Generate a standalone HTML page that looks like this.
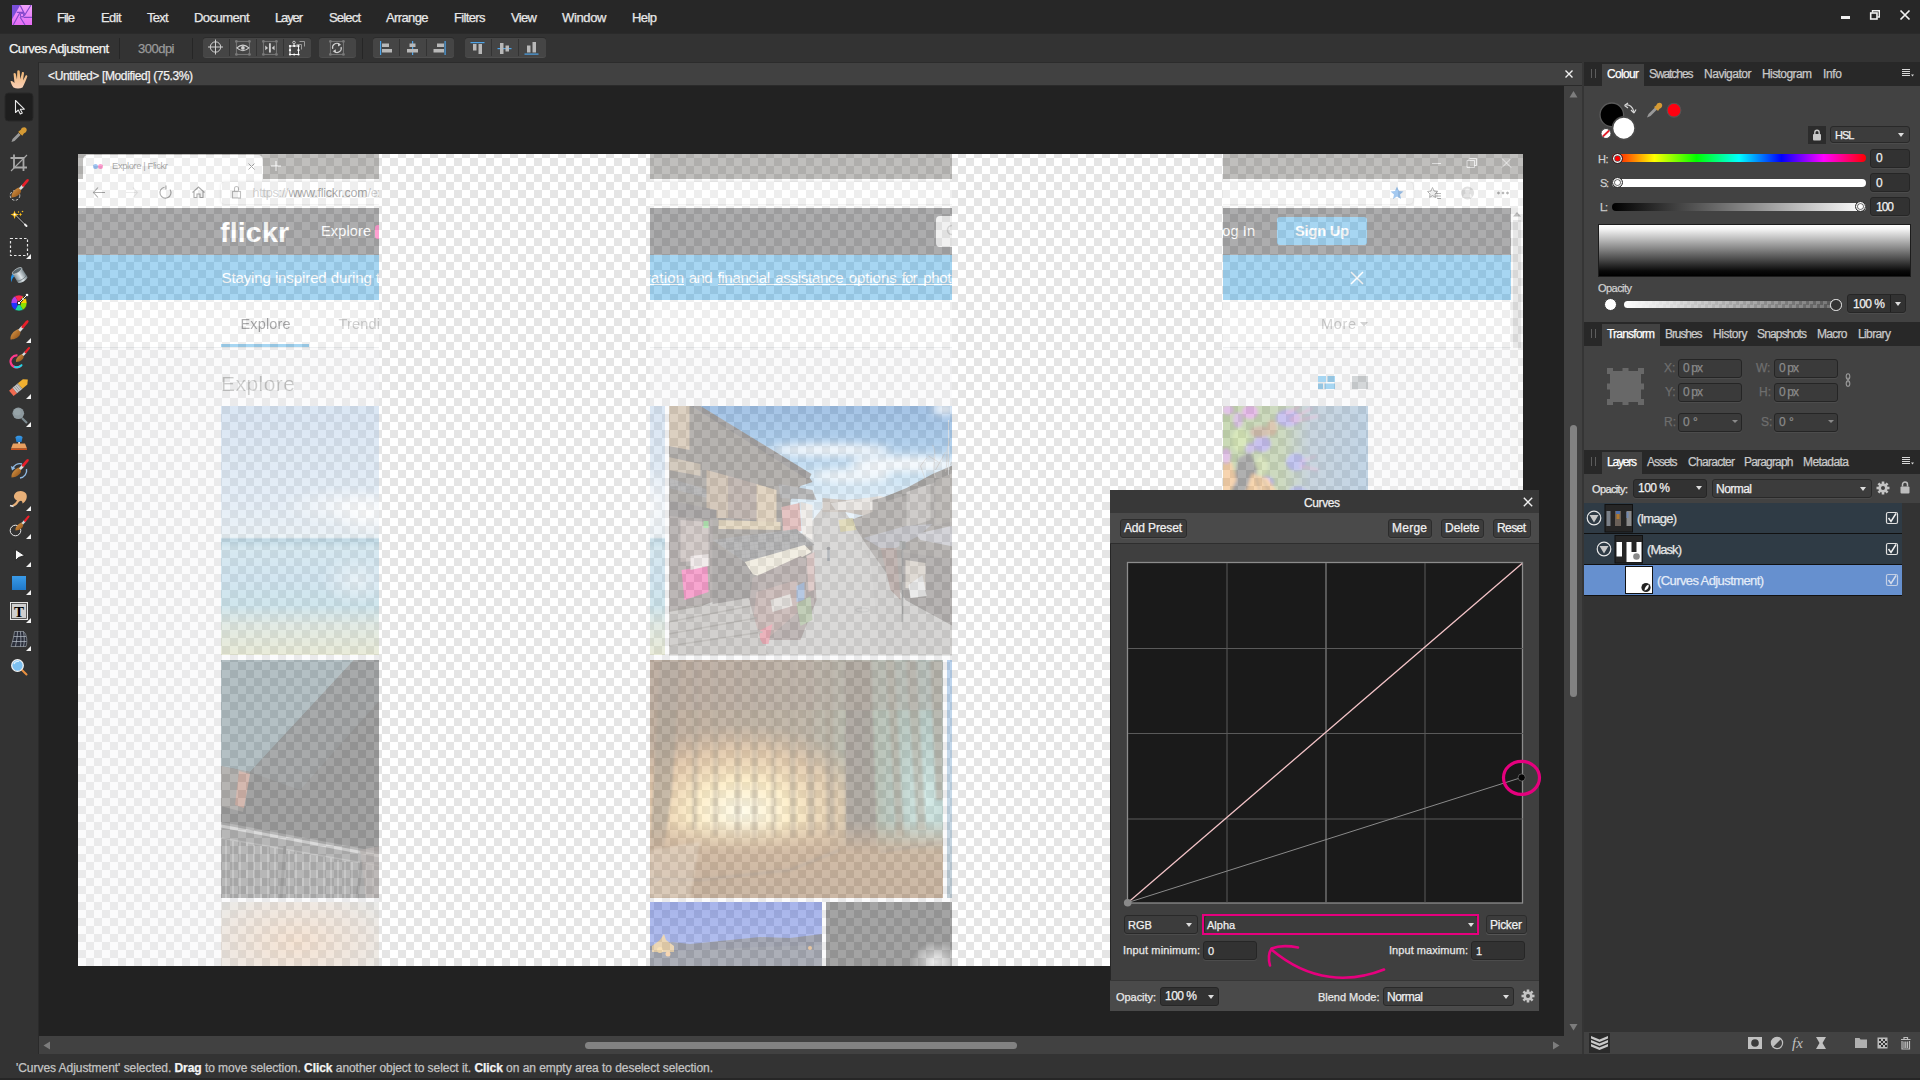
<!DOCTYPE html>
<html><head><meta charset="utf-8"><title>Affinity Photo</title>
<style>
*{box-sizing:border-box;margin:0;padding:0}
html,body{width:1920px;height:1080px;overflow:hidden;background:#222}
body{position:relative;font-family:"Liberation Sans",sans-serif;font-size:13px;color:#e8e8e8;-webkit-font-smoothing:antialiased}
.a{position:absolute}
.t{position:absolute;white-space:nowrap;line-height:16px;height:16px;-webkit-text-stroke:.25px currentColor}
.s{font-size:12px}
.box{position:absolute;background:#323232;border:1px solid #262626;border-radius:3px;box-shadow:0 1px 0 #4c4c4c}
.sel{background:#3c3c3c;border-color:#292929}
.btn{position:absolute;background:#3c3c3c;border:1px solid #2c2c2c;border-radius:3px;box-shadow:0 1px 0 #555}
.tri{position:absolute;width:0;height:0;border-left:4px solid transparent;border-right:4px solid transparent;border-top:4px solid #ddd}
svg{position:absolute;overflow:visible}
</style></head><body>
<div class="a" style="left:0;top:0;width:1920px;height:33px;background:#272727"></div>
<svg style="left:12px;top:5px" width="20" height="20" viewBox="0 0 20 20">
 <defs><linearGradient id="lg" x1="0" y1="0" x2="0" y2="1"><stop offset="0" stop-color="#f0a2fc"></stop><stop offset="1" stop-color="#e66cf4"></stop></linearGradient></defs>
 <rect width="20" height="20" fill="url(#lg)"></rect>
 <polygon points="0,0 8.300,0 0,14.200" fill="#7a4fd8"></polygon>
 <g stroke="#8248cc" stroke-width="1.150" fill="none">
  <path d="M1.200 20L8.100 7.300M4.800 7.300H11.500M8.200 0.600L12.800 9.500M19 0L12.300 10.800M11.500 12.400H20M8 12L13 20"></path>
  <circle cx="10" cy="10" r="1.800"></circle>
 </g>
</svg>
<span class="t" style="left: 57px; top: 10px; letter-spacing: -0.984px;">File</span>
<span class="t" style="left: 101px; top: 10px; letter-spacing: -0.635px;">Edit</span>
<span class="t" style="left: 147px; top: 10px; letter-spacing: -0.781px;">Text</span>
<span class="t" style="left: 194px; top: 10px; letter-spacing: -0.536px;">Document</span>
<span class="t" style="left: 275px; top: 10px; letter-spacing: -1.133px;">Layer</span>
<span class="t" style="left: 329px; top: 10px; letter-spacing: -0.828px;">Select</span>
<span class="t" style="left: 386px; top: 10px; letter-spacing: -0.625px;">Arrange</span>
<span class="t" style="left: 454px; top: 10px; letter-spacing: -0.648px;">Filters</span>
<span class="t" style="left: 511px; top: 10px; letter-spacing: -0.651px;">View</span>
<span class="t" style="left: 562px; top: 10px; letter-spacing: -0.35px;">Window</span>
<span class="t" style="left: 632px; top: 10px; letter-spacing: -0.583px;">Help</span>
<div class="a" style="left:1841px;top:16px;width:9px;height:3px;background:#f0f0f0"></div>
<svg style="left:1870px;top:10px" width="10" height="10" viewBox="0 0 10 10" fill="none" stroke="#f0f0f0" stroke-width="1.4"><path d="M2.5 2.5V0.7H9.3V7H7.5"></path><rect x="0.7" y="3" width="6.3" height="6" stroke-width="1.6"></rect></svg>
<svg style="left:1900px;top:10px" width="10" height="10" viewBox="0 0 10 10" stroke="#f0f0f0" stroke-width="1.7"><path d="M0.5 0.5L9.5 9.5M9.5 0.5L0.5 9.5"></path></svg>

<div class="a" style="left:0;top:33px;width:1920px;height:29px;background:#333;border-top:1px solid #2a2a2a"></div>
<span class="t" style="left: 9px; top: 41px; color: rgb(244, 244, 244); letter-spacing: -0.569px;">Curves Adjustment</span>
<div class="a" style="left:119px;top:38px;width:1px;height:21px;background:#262626"></div>
<span class="t" style="left: 138px; top: 41px; color: rgb(154, 154, 154); letter-spacing: -0.509px;">300dpi</span>
<div class="a" style="left:192px;top:38px;width:1px;height:21px;background:#262626"></div>
<div class="a" style="left:362px;top:38px;width:1px;height:21px;background:#262626"></div>
<!-- group 1 -->
<div class="a tb" style="left:203px;top:38px;width:108px;height:18.500px"></div>
<div class="a tbs" style="left:229px;top:39px"></div><div class="a tbs" style="left:256px;top:39px"></div><div class="a tbs" style="left:283px;top:39px"></div>
<div class="a tb" style="left:319px;top:38px;width:37px;height:18.500px"></div>
<div class="a tb" style="left:373px;top:38px;width:81px;height:18.500px"></div>
<div class="a tbs" style="left:399px;top:39px"></div><div class="a tbs" style="left:426px;top:39px"></div>
<div class="a tb" style="left:465px;top:38px;width:81px;height:18.500px"></div>
<div class="a tbs" style="left:491px;top:39px"></div><div class="a tbs" style="left:518px;top:39px"></div>
<style>.tb{background:#454545;border-radius:3px;box-shadow:0 1px 0 #4e4e4e,0 -1px 0 #2c2c2c}.tbs{width:1px;height:17px;background:#333}</style>
<!-- icons: target -->
<svg style="left:207px;top:39.400px" width="17" height="17" viewBox="0 0 17 17" fill="none" stroke="#d0d0d0" stroke-width="1"><circle cx="8.5" cy="8" r="5.2"></circle><path d="M8.5 0.5V15.5M1 8H16"></path></svg>
<!-- eye -->
<svg style="left:235.200px;top:40.100px" width="15.800" height="15.800" viewBox="0 0 17 17" fill="none"><rect x="1.5" y="1.5" width="14" height="14" stroke="#7a7a7a"></rect><g fill="#7a7a7a"><circle cx="1.5" cy="1.5" r="1.5"></circle><circle cx="15.5" cy="1.5" r="1.5"></circle><circle cx="1.5" cy="15.5" r="1.5"></circle><circle cx="15.5" cy="15.5" r="1.5"></circle></g><path d="M2 8.5Q8.5 2.5 15 8.5Q8.5 14.5 2 8.5Z" stroke="#d0d0d0" stroke-width="1.1" fill="#454545"></path><circle cx="8.5" cy="8.5" r="2" fill="#d0d0d0"></circle></svg>
<!-- flip -->
<svg style="left:262.200px;top:40.100px" width="15.800" height="15.800" viewBox="0 0 17 17" fill="none"><rect x="1.5" y="1.5" width="14" height="14" stroke="#7a7a7a"></rect><g fill="#7a7a7a"><circle cx="1.5" cy="1.5" r="1.5"></circle><circle cx="15.5" cy="1.5" r="1.5"></circle><circle cx="1.5" cy="15.5" r="1.5"></circle><circle cx="15.5" cy="15.5" r="1.5"></circle></g><rect x="7.5" y="3.5" width="2" height="10" fill="#cfcfcf"></rect><path d="M3.5 6L6.5 8.5L3.5 11Z M13.5 6L10.5 8.5L13.5 11Z" fill="#cfcfcf"></path></svg>
<!-- transform copies -->
<svg style="left:288px;top:38.500px" width="19" height="19" viewBox="0 0 19 19" fill="none"><path d="M11.5 2.5H16.5V7.5" stroke="#9a9a9a"></path><path d="M8.5 5.5H13.5V10.5" stroke="#9a9a9a"></path><circle cx="6" cy="3.5" r="1.3" stroke="#e0e0e0" stroke-width=".8"></circle><path d="M6 5V7" stroke="#e0e0e0"></path><rect x="2" y="7" width="8.5" height="8.5" stroke="#f0f0f0" stroke-width="1"></rect><g fill="#fff"><circle cx="2" cy="7" r="1.1"></circle><circle cx="6.2" cy="7" r="1.1"></circle><circle cx="10.5" cy="7" r="1.1"></circle><circle cx="2" cy="11.2" r="1.1"></circle><circle cx="10.5" cy="11.2" r="1.1"></circle><circle cx="2" cy="15.5" r="1.1"></circle><circle cx="6.2" cy="15.5" r="1.1"></circle><circle cx="10.5" cy="15.5" r="1.1"></circle></g></svg>
<!-- refresh -->
<svg style="left:329.150px;top:40.100px" width="15.800" height="15.800" viewBox="0 0 17 17" fill="none"><rect x="1.5" y="1.5" width="14" height="14" stroke="#7a7a7a"></rect><g fill="#7a7a7a"><circle cx="1.5" cy="1.5" r="1.5"></circle><circle cx="15.5" cy="1.5" r="1.5"></circle><circle cx="1.5" cy="15.5" r="1.5"></circle><circle cx="15.5" cy="15.5" r="1.5"></circle></g><path d="M4 9.5A4.6 4.6 0 0 1 11.5 4.8" stroke="#d0d0d0" stroke-width="1.3"></path><path d="M13 7.5A4.6 4.6 0 0 1 5.5 12.2" stroke="#d0d0d0" stroke-width="1.3"></path><path d="M9.5 3L13 5L9.8 7Z M7.5 14L4 12L7.2 10Z" fill="#d0d0d0"></path></svg>
<!-- align left / centre / right -->
<svg style="left:378px;top:40px" width="17" height="17" viewBox="0 0 17 17"><rect x="2" y="1" width="1.2" height="14" fill="#4da3e8"></rect><rect x="4" y="3.5" width="7" height="3.5" fill="#b8b8b8"></rect><rect x="4" y="9" width="10" height="3.5" fill="#b8b8b8"></rect></svg>
<svg style="left:404px;top:40px" width="17" height="17" viewBox="0 0 17 17"><rect x="8" y="1" width="1.2" height="14" fill="#4da3e8"></rect><rect x="5.5" y="3.5" width="6" height="3.5" fill="#b8b8b8"></rect><rect x="3" y="9" width="11" height="3.5" fill="#b8b8b8"></rect></svg>
<svg style="left:431px;top:40px" width="17" height="17" viewBox="0 0 17 17"><rect x="13.5" y="1" width="1.2" height="14" fill="#4da3e8"></rect><rect x="6" y="3.5" width="7" height="3.5" fill="#b8b8b8"></rect><rect x="2.5" y="9" width="10.500" height="3.5" fill="#b8b8b8"></rect></svg>
<!-- align top / middle / bottom -->
<svg style="left:469px;top:40px" width="17" height="17" viewBox="0 0 17 17"><rect x="1.500" y="2" width="14" height="1.2" fill="#4da3e8"></rect><rect x="4" y="4" width="3.500" height="6.500" fill="#b8b8b8"></rect><rect x="9.500" y="4" width="3.500" height="10" fill="#b8b8b8"></rect></svg>
<svg style="left:496px;top:40px" width="17" height="17" viewBox="0 0 17 17"><rect x="1.500" y="8" width="14" height="1.2" fill="#4da3e8"></rect><rect x="4" y="3" width="3.500" height="11" fill="#b8b8b8"></rect><rect x="9.500" y="5.500" width="3.500" height="6" fill="#b8b8b8"></rect></svg>
<svg style="left:523px;top:40px" width="17" height="17" viewBox="0 0 17 17"><rect x="1.500" y="13.500" width="14" height="1.2" fill="#4da3e8"></rect><rect x="4" y="5.500" width="3.500" height="7" fill="#b8b8b8"></rect><rect x="9.500" y="2" width="3.500" height="10.500" fill="#b8b8b8"></rect></svg>

<div class="a" style="left:0;top:62px;width:38px;height:992px;background:#333"></div>
<div class="a" style="left:38px;top:62px;width:1px;height:992px;background:#2a2a2a"></div>
<svg style="left:0;top:62px" width="38" height="620" viewBox="0 62 38 620">
<defs>
<linearGradient id="skin" x1="0" y1="0" x2="0" y2="1"><stop offset="0" stop-color="#f0b46e"></stop><stop offset="1" stop-color="#f8d0b8"></stop></linearGradient>
<linearGradient id="bristle" x1="0" y1="0" x2="1" y2="1"><stop offset="0" stop-color="#e0a050"></stop><stop offset="1" stop-color="#8a4a10"></stop></linearGradient>
<linearGradient id="blue" x1="0" y1="0" x2="0" y2="1"><stop offset="0" stop-color="#3a9be8"></stop><stop offset="1" stop-color="#1f78c8"></stop></linearGradient>
<linearGradient id="met" x1="0" y1="0" x2="1" y2="0"><stop offset="0" stop-color="#7d8a90"></stop><stop offset=".5" stop-color="#dfe6ea"></stop><stop offset="1" stop-color="#79868c"></stop></linearGradient>
<g id="brush"><path d="M0 0C-.5 -4 2.500 -7.500 7 -9.500C9.500 -8 9.500 -5.500 8 -3.500C5.500 -.5 2.500 -.2 0 0Z" fill="url(#bristle)"></path><path d="M8 -8L11.200 -11.500" stroke="#dcdcdc" stroke-width="2.700"></path><path d="M11.200 -11.500L15 -16" stroke="#e8202a" stroke-width="2.600" stroke-linecap="round"></path><path d="M14.500 -15.400L15.600 -16.700" stroke="#e8202a" stroke-width="1.600" stroke-linecap="round"></path></g>
<polygon id="fly" points="0,5 5,0 5,5" fill="#f2f2f2"></polygon>
</defs>
<!-- hand -->
<g transform="translate(0,0)">
<path d="M13.500 87.500C11.500 85 11 82.500 10.500 81.500C11.500 80.500 13 81.500 14.500 83L13.500 73.500C14.500 72.500 15.500 72.800 15.800 74L17 79.500L17.300 70.800C18.300 69.800 19.500 70 19.700 71.300L20.300 79.300L22 72.200C23 71.500 24 72 24 73.200L23 80.500L25.800 75.300C26.800 74.800 27.500 75.500 27.300 76.500C26 80 24.500 84 22.500 87.500C20 88.800 16 88.800 13.500 87.500Z" fill="url(#skin)"></path>
</g>
<!-- pointer selected -->
<rect x="5" y="93" width="28" height="28" rx="3.500" fill="#1e1e1e" stroke="#282828"></rect>
<path d="M15.500 100.500V112.500L18.300 110L20.300 114L22.300 113L20.300 109.200H24.300Z" fill="#1a1a1a" stroke="#e8e8e8" stroke-width="1.100" stroke-linejoin="round"></path>
<!-- eyedropper -->
<path d="M11.500 142L12.500 139L19.500 132L21.500 134L14.500 141Z" fill="#9a9a9a"></path><path d="M18.500 132.500L21 135" stroke="#6a5020" stroke-width="1"></path>
<path d="M18.300 131.800C19.500 130.500 20.500 130.500 21 129.500C21.500 127.500 24.500 126.500 26 128C27.500 129.500 26.500 132.500 24.500 133C23.500 133.500 23.500 134.500 22.300 135.700Z" fill="#d59a34"></path>
<!-- crop -->
<g stroke="#a8a8a8" stroke-width="1.800" fill="none"><path d="M14 154.500V167.500H27M10.500 158H23.500V171"></path><path d="M11 171L27 155" stroke-width="1.100"></path></g>
<!-- selection brush -->
<circle cx="15" cy="195.500" r="4.800" fill="none" stroke="#cfcfcf" stroke-width=".9" stroke-dasharray="2.500 1.500"></circle>
<use href="#brush" transform="translate(11.500,197.500) scale(1.050)"></use>
<!-- wand -->
<path d="M15.500 215L26.500 226" stroke="#202020" stroke-width="2"></path><path d="M15.500 215L26.500 226" stroke="#c8c8c8" stroke-width="1"></path><path d="M25 224.500L26.500 226" stroke="#eee" stroke-width="2" stroke-linecap="round"></path>
<path d="M14.500 210.500L15.500 213.500L19 214.500L15.800 215.800L14.500 219L13.500 215.800L10.500 214.500L13.500 213.500Z" fill="#ffc21a"></path><circle cx="14.600" cy="214.600" r="1" fill="#fff"></circle>
<path d="M20.500 212.500L21 214L22.300 214.500L21 215L20.500 216.500L20 215L18.800 214.500L20 214Z" fill="#ffc21a"></path><circle cx="22.500" cy="211.500" r=".8" fill="#ffc21a"></circle><circle cx="18.500" cy="212" r=".7" fill="#ffc21a"></circle>
<!-- marquee -->
<rect x="10.500" y="238.500" width="17" height="17" fill="none" stroke="#e6e6e6" stroke-width="1.200" stroke-dasharray="2.500 2"></rect>
<use href="#fly" x="26" y="254"></use>
<!-- bucket -->
<path d="M15 273C11.500 273.500 10 277 11.500 282.500C12 279 13 276.500 16.500 275.500Z" fill="#1f8fe6"></path>
<g transform="translate(20,275.500) rotate(-32)"><path d="M-5.500 -5.500H5.500V5.500C3 7.500 -3 7.500 -5.500 5.500Z" fill="url(#met)"></path><ellipse cx="0" cy="-5.500" rx="5.500" ry="2" fill="#5a666c" stroke="#cfd6da" stroke-width=".6"></ellipse><path d="M-5.500 3C-3 5 3 5 5.500 3" stroke="#60696e" stroke-width=".7" fill="none"></path></g>
<!-- colour wheel (conic via foreignObject-less: pie slices) -->
<g transform="translate(19,303)">
<path d="M0 0L8 0A8 8 0 0 1 4 6.930Z" fill="#8ee000"></path><path d="M0 0L4 6.930A8 8 0 0 1 -4 6.930Z" fill="#19d6a0"></path><path d="M0 0L-4 6.930A8 8 0 0 1 -8 0Z" fill="#2030ff"></path><path d="M0 0L-8 0A8 8 0 0 1 -4 -6.930Z" fill="#b040e8"></path><path d="M0 0L-4 -6.930A8 8 0 0 1 4 -6.930Z" fill="#ff2a50"></path><path d="M0 0L4 -6.930A8 8 0 0 1 8 0Z" fill="#ffd000"></path>
<circle r="8" fill="none" stroke="#313131" stroke-width=".6"></circle><circle r="2.200" fill="#222"></circle><path d="M0 0L8 -8" stroke="#222" stroke-width="2.200"></path><path d="M0 0L8 -8" stroke="#f2f2f2" stroke-width="1"></path><circle r="1.200" fill="#fff"></circle><circle cx="8" cy="-8" r="1.300" fill="#fff"></circle><circle cx="4" cy="-4" r="1" fill="#ddd"></circle>
</g>
<!-- paint brush -->
<use href="#brush" transform="translate(10.500,339.500) scale(1.100)"></use>
<use href="#fly" x="26" y="338"></use>
<!-- colour replace brush -->
<path d="M17.500 355.500A6 6 0 1 0 21 365.500" fill="none" stroke="#ff3a8a" stroke-width="2.200"></path><path d="M14 366.500A6 6 0 0 0 22 364.500" fill="none" stroke="#20d8e8" stroke-width="2"></path>
<use href="#brush" transform="translate(16,362) scale(.850)"></use>
<!-- eraser -->
<g transform="translate(19,387) rotate(-40)"><rect x="-10" y="-3.500" width="4.500" height="7" fill="#f06a50"></rect><rect x="-5.500" y="-3.500" width="7" height="7" fill="#c8c8c8"></rect><path d="M-3.500 -3.500V3.500M-1.500 -3.500V3.500M.500 -3.500V3.500" stroke="#8a8a8a" stroke-width=".7"></path><path d="M1.500 -3.500H8L11.500 0L8 3.500H1.500Z" fill="#f0b030"></path></g>
<use href="#fly" x="26" y="394"></use>
<!-- dodge -->
<path d="M22 418L27 423" stroke="#7c8a90" stroke-width="2.200"></path><circle cx="18.300" cy="413.300" r="5.800" fill="#8d999e"></circle><circle cx="17.300" cy="412" r="3.500" fill="#9aa6ab" opacity=".7"></circle>
<use href="#fly" x="26" y="422"></use>
<!-- clone stamp -->
<path d="M15.500 437.500C15.500 435 22.500 435 22.500 437.500L21.500 442H16.500Z" fill="url(#blue)"></path><rect x="18.300" y="442" width="1.600" height="3" fill="#e8e8e8"></rect><path d="M13 443.500H25L27 448.500H11Z" fill="#e8a060"></path><path d="M11 448.500H27V450H11Z" fill="#c8501a"></path>
<!-- undo brush -->
<path d="M12.500 469A7.500 7.500 0 0 1 22 464" stroke="#8fb8e0" stroke-width="1.400" fill="none"></path><path d="M10.800 466L12 470.500L15.500 468Z" fill="#8fb8e0"></path><path d="M26.500 469A7.500 7.500 0 0 1 20 478" stroke="#8fb8e0" stroke-width="1.400" fill="none"></path>
<use href="#brush" transform="translate(11.500,477.500) scale(1.050)"></use>
<!-- smudge -->
<path d="M10 505.500C13 507.500 16 506 18 503C20 500 22.500 500 22.500 503.500C26 502 28 497 26 493.500C24 490.500 18 490 15 493.500C13 496 14 499 17 500.500C15 504 12 505.500 10 505.500Z" fill="#e8b078"></path><path d="M10 505.500L13.500 506.500" stroke="#e0e0e0" stroke-width="1.500"></path>
<use href="#fly" x="26" y="506"></use>
<!-- blur brush -->
<circle cx="15.500" cy="530.500" r="5.300" fill="none" stroke="#e8e8e8" stroke-width="1"></circle>
<use href="#brush" transform="translate(15.500,530.500) scale(.850)"></use>
<use href="#fly" x="26" y="534"></use>
<!-- node arrow -->
<path d="M15.500 549.500V560.500L18.500 557.500L24.500 555.500Z" fill="#f8f8f8" stroke="#1a1a1a" stroke-width=".8" stroke-linejoin="round"></path>
<use href="#fly" x="26" y="562"></use>
<!-- rectangle -->
<rect x="12" y="576" width="14" height="14" fill="url(#blue)"></rect>
<use href="#fly" x="26" y="590"></use>
<!-- text -->
<rect x="10.500" y="602.500" width="17" height="17" fill="#d4d4d4" stroke="#e8e8e8"></rect><rect x="11.500" y="603.500" width="15" height="15" fill="#cfcfcf" stroke="#3a3a3a" stroke-width=".8"></rect>
<text x="19" y="616.500" font-family="Liberation Serif,serif" font-weight="bold" font-size="15" text-anchor="middle" fill="#000">T</text>
<use href="#fly" x="26" y="618"></use>
<!-- mesh -->
<path d="M14.500 631.500H23.500C27 634 27.500 642 26 646.500H11C12.500 642 14 636 14.500 631.500Z" fill="#2a2e3a" stroke="#9aa0a8" stroke-width=".7"></path>
<path d="M13.700 636.500H26M12.500 641.500H26.500M17.500 631.500C17.500 637 16 643 15.500 646.500M20.500 631.500C21 637 21 643 20.500 646.500M23.500 631.500C24.500 637 24.500 643 23.500 646.500" stroke="#b8bec8" stroke-width=".7" fill="none"></path>
<use href="#fly" x="26" y="646"></use>
<!-- zoom -->
<path d="M22 670L26.500 674.500" stroke="#e89040" stroke-width="2" stroke-linecap="round"></path>
<circle cx="17.500" cy="665.500" r="5.800" fill="#7cc0f0" stroke="#f2f2f2" stroke-width="1.300"></circle><path d="M14 664A4 4 0 0 1 19 661.500" stroke="#d8f0ff" stroke-width="1.300" fill="none"></path>
</svg>

<!-- doc tab -->
<div class="a" style="left:39px;top:62px;width:1543px;height:24px;background:#414141;border-top:1px solid #2c2c2c;border-bottom:1px solid #2a2a2a"></div>
<span class="t s" style="left: 48px; top: 67.5px; color: rgb(242, 242, 242); letter-spacing: -0.372px;">&lt;Untitled&gt; [Modified] (75.3%)</span>
<svg style="left:1565px;top:70px" width="8" height="8" viewBox="0 0 8 8" stroke="#f0f0f0" stroke-width="1.400"><path d="M.5 .5L7.500 7.500M7.500 .5L.5 7.500"></path></svg>
<!-- scrollbars -->
<div class="a" style="left:1564px;top:86px;width:18px;height:968px;background:#414141"></div>
<div class="a" style="left:1582px;top:62px;width:2px;height:992px;background:#353535"></div>
<div class="a" style="left:39px;top:1036px;width:1543px;height:18px;background:#414141"></div>
<div class="a" style="left:1570px;top:425px;width:7px;height:272px;border-radius:4px;background:#828282"></div>
<div class="a" style="left:585px;top:1042px;width:432px;height:7px;border-radius:4px;background:#828282"></div>
<svg style="left:1569px;top:91px" width="9" height="7"><path d="M4.500 0L8.500 6.500H.5Z" fill="#7d7d7d"></path></svg>
<svg style="left:1569px;top:1024px" width="9" height="7"><path d="M4.500 6.500L8.500 0H.5Z" fill="#7d7d7d"></path></svg>
<svg style="left:43px;top:1041px" width="8" height="9"><path d="M.5 4.500L7 .5V8.500Z" fill="#7d7d7d"></path></svg>
<svg style="left:1552px;top:1041px" width="8" height="9"><path d="M7.500 4.500L1 .5V8.500Z" fill="#7d7d7d"></path></svg>
<!-- canvas -->
<div class="a" id="cv" style="left:78px;top:154px;width:1445px;height:812px;overflow:hidden;background-color:#fff;background-image:conic-gradient(#e5e5e5 25%,#fff 0 50%,#e5e5e5 0 75%,#fff 0);background-size:16px 16px;background-position:0px 4px">
<div class="a" id="pg" style="left:-78px;top:-154px;width:1920px;height:1080px;opacity:.37;-webkit-mask-image:linear-gradient(90deg,#000 378.800px,transparent 379.200px,transparent 650px,#000 650.400px,#000 951.600px,transparent 952px,transparent 1222.700px,#000 1223.100px);mask-image:linear-gradient(90deg,#000 378.800px,transparent 379.200px,transparent 650px,#000 650.400px,#000 951.600px,transparent 952px,transparent 1222.700px,#000 1223.100px)">
<style>
#pg div,#pg span{position:absolute}
#pg span{white-space:nowrap}
.ph{overflow:hidden}
</style>
<!-- browser chrome -->
<div style="left:78px;top:154px;width:1445px;height:24.500px;background:#55524e"></div>
<div style="left:83px;top:155px;width:180px;height:24px;background:#fff;border-radius:5px 5px 0 0"></div>
<div style="left:78px;top:179px;width:1445px;height:29px;background:#fff"></div>
<div style="left:93px;top:164px;width:5px;height:5px;border-radius:3px;background:#0063dc"></div>
<div style="left:98px;top:164px;width:5px;height:5px;border-radius:3px;background:#ff0084"></div>
<span style="left: 112px; top: 160px; font-size: 9.5px; color: rgb(34, 34, 34); line-height: 12px; letter-spacing: -0.444px;">Explore | Flickr</span>
<svg style="left:248px;top:163px" width="7" height="7" stroke="#222" stroke-width="1"><path d="M.5 .5L6.500 6.500M6.500 .5L.5 6.500"></path></svg>
<svg style="left:271px;top:161px" width="10" height="10" stroke="#fff" stroke-width="1"><path d="M5 0V10M0 5H10"></path></svg>
<svg style="left:1432px;top:158px" width="80" height="10" stroke="#e8e8e8" stroke-width=".8" fill="none"><path d="M0 5.500H9"></path><path d="M37 2.500V.5H44.500V7.500H42.500M35 2.500H42.500V9.500H35Z"></path><path d="M70 .5L79 9.500M79 .5L70 9.500"></path></svg>
<!-- address row -->
<svg style="left:90px;top:185px" width="130" height="16" fill="none" stroke="#222" stroke-width="1.100"><path d="M15 7.500H3.500M8 2.500L3.500 7.500L8 12.500"></path><path d="M36 7.500H47.500M43 2.500L47.500 7.500L43 12.500" stroke="#ccc"></path><path d="M80 4.500A5.500 5.500 0 1 1 74.500 2.200M76 0.500V4.500"></path><path d="M102.500 7.500L108.500 2L114.500 7.500M104 6.500V12.500H107V9H110V12.500H113V6.500"></path></svg>
<div style="left:221px;top:182px;width:1192px;height:22px;border-radius:4px;background:#fff;box-shadow:0 0 3px rgba(0,0,0,.35)"></div>
<svg style="left:231px;top:185px" width="12" height="15" fill="none" stroke="#555" stroke-width="1.100"><rect x="1.500" y="6.500" width="8" height="6.500"></rect><path d="M3.500 6.500V3.500A2 2 0 0 1 7.500 3.500V6.500"></path></svg>
<span style="left: 252.5px; top: 186px; font-size: 12.5px; color: rgb(102, 102, 102); line-height: 14px; letter-spacing: -0.206px;"><span style="position:static;color:#888">https://</span><span style="position:static;color:#1a1a1a">www.flickr.com</span><span style="position:static;color:#888">/explore</span></span>
<svg style="left:1390px;top:186px" width="130" height="14" fill="none" stroke="#333" stroke-width="1"><path d="M7 .5L9 5L13.500 5.500L10 8.500L11 13L7 10.500L3 13L4 8.500L.5 5.500L5 5Z" fill="#0a6cd6" stroke="none"></path><path d="M42.500 1.500L44 5L47.500 5.500L45 8L45.500 11.500L42.500 9.500L39.500 11.500L40 8L37.500 5.500L41 5Z"></path><path d="M46 7.500H51M46 10H51M47 12.500H51"></path><circle cx="77.500" cy="7" r="6.500" fill="#aaa" stroke="none"></circle><circle cx="77.500" cy="5" r="2.500" fill="#ddd" stroke="none"></circle><path d="M73 11.500A4.500 4.500 0 0 1 82 11.500Z" fill="#ddd" stroke="none"></path><circle cx="108.500" cy="7" r=".9" fill="#333"></circle><circle cx="113" cy="7" r=".9" fill="#333"></circle><circle cx="117.500" cy="7" r=".9" fill="#333"></circle></svg>
<!-- flickr nav -->
<div style="left:78px;top:208px;width:1433px;height:47px;background:#212124"></div>
<span style="left: 220px; top: 215px; font-size: 28.5px; font-weight: bold; color: rgb(255, 255, 255); line-height: 34px; letter-spacing: 0.175px;">flickr</span>
<span style="left: 321px; top: 222px; font-size: 14.5px; color: rgb(255, 255, 255); line-height: 18px; letter-spacing: 0.138px;">Explore</span>
<div style="left:375px;top:225px;width:30px;height:14px;border-radius:3px;background:#ff0084"></div>
<div style="left:936.200px;top:215.800px;width:280px;height:31px;border-radius:4px;background:#d8d8d8"></div>
<svg style="left:946px;top:223.500px" width="14" height="14" fill="none" stroke="#8a8a8a" stroke-width="1.600"><circle cx="6" cy="6" r="4.500"></circle><path d="M9.500 9.500L13 13"></path></svg>
<span style="left: 1214px; top: 222px; font-size: 14.5px; color: rgb(255, 255, 255); line-height: 18px; letter-spacing: 0.134px;">Log In</span>
<div style="left:1277px;top:217px;width:90px;height:28px;border-radius:3px;background:#128fdc"></div>
<span style="left: 1295px; top: 222px; font-size: 14.5px; font-weight: bold; color: rgb(255, 255, 255); line-height: 18px; letter-spacing: -0.13px;">Sign Up</span>
<!-- banner -->
<div style="left:78px;top:255px;width:1433px;height:45px;background:#128fdc"></div>
<span style="left: 221.5px; top: 268px; font-size: 15px; color: rgb(255, 255, 255); line-height: 19px; letter-spacing: -0.101px;">Staying inspired during the</span>
<span style="left: 614px; top: 268px; font-size: 15px; color: rgb(255, 255, 255); line-height: 19px; letter-spacing: 0.163px;">inspiration</span>
<span style="left: 688.7px; top: 268px; font-size: 15px; color: rgb(255, 255, 255); line-height: 19px; letter-spacing: -0.616px;">and</span>
<span style="left: 717.5px; top: 268px; font-size: 15px; color: rgb(255, 255, 255); line-height: 19px; letter-spacing: -0.318px;">financial</span>
<span style="left: 775.3px; top: 268px; font-size: 15px; color: rgb(255, 255, 255); line-height: 19px; letter-spacing: -0.275px;">assistance</span>
<span style="left: 848.7px; top: 268px; font-size: 15px; color: rgb(255, 255, 255); line-height: 19px; letter-spacing: -0.063px;">options</span>
<span style="left: 901.7px; top: 268px; font-size: 15px; color: rgb(255, 255, 255); line-height: 19px; letter-spacing: -0.858px;">for</span>
<span style="left: 923.3px; top: 268px; font-size: 15px; color: rgb(255, 255, 255); line-height: 19px; letter-spacing: -0.396px;">photographers</span>
<div style="left:614px;top:283.500px;width:70px;height:1.200px;background:#fff"></div>
<div style="left:717.500px;top:283.500px;width:298px;height:1.200px;background:#fff"></div>
<svg style="left:1350px;top:271px" width="14" height="14" stroke="#fff" stroke-width="1.500"><path d="M1 1L13 13M13 1L1 13"></path></svg>
<!-- sub nav -->
<div style="left:78px;top:300px;width:1433px;height:46.500px;background:#fff"></div>
<div style="left:78px;top:346.500px;width:1433px;height:1px;background:#cfd3d6"></div>
<div style="left:78px;top:347.500px;width:1445px;height:622px;background:#f3f5f6"></div>
<span style="left: 240.5px; top: 315px; font-size: 14.5px; color: rgb(33, 33, 36); line-height: 18px; letter-spacing: 0.138px;">Explore</span>
<div style="left:221px;top:344px;width:88px;height:3px;background:#128fdc"></div>
<span style="left: 338.5px; top: 315px; font-size: 14.5px; color: rgb(137, 137, 137); line-height: 18px; letter-spacing: 0.185px;">Trending</span>
<span style="left: 1321px; top: 315px; font-size: 14.5px; color: rgb(137, 137, 137); line-height: 18px; letter-spacing: 0.651px;">More</span>
<svg style="left:1360px;top:322px" width="8" height="5"><path d="M0 0H8L4 4.500Z" fill="#898989"></path></svg>
<!-- browser scrollbar -->
<div style="left:1511px;top:208px;width:12px;height:760px;background:#f1f1f1"></div>
<div style="left:1513px;top:220px;width:8px;height:128px;background:#c1c1c1"></div>
<svg style="left:1513px;top:212px" width="8" height="5"><path d="M0 4.500H8L4 0Z" fill="#505050"></path></svg>
<!-- heading -->
<span style="left: 221px; top: 371px; font-size: 21px; color: rgb(112, 112, 112); line-height: 25px; -webkit-text-stroke: 0.2px rgb(243, 245, 246); letter-spacing: 0.466px;">Explore</span>
<svg style="left:1318px;top:376px" width="52" height="14"><path d="M0 0H8V6H0ZM9.500 0H17V6H9.500ZM0 7.500H5V13H0ZM6.500 7.500H17V13H6.500Z" fill="#128fdc"></path><rect x="34" y="0" width="16" height="13" fill="#8a9299"></rect></svg>
<!-- P1 beach 221-665 x 406-655 -->
<div class="ph" style="left:221px;top:406px;width:444px;height:249px;background:linear-gradient(180deg,#9cbce0 0%,#b6cfe8 35%,#c6d9e8 50%,#cbdeea 52.700%,#5a9aba 53.500%,#93c4d8 57%,#88bad8 70%,#80bace 80%,#b2c8b8 88%,#c4c898 100%)">
<div style="left:60px;top:80px;width:130px;height:40px;border-radius:50%;background:radial-gradient(closest-side,rgba(255,255,255,.7),rgba(255,255,255,0))"></div>
<div style="left:110px;top:85px;width:70px;height:45px;border-radius:50%;background:radial-gradient(closest-side,rgba(255,255,255,.95),rgba(255,255,255,0))"></div>
<div style="left:400px;top:60px;width:60px;height:80px;border-radius:50%;background:radial-gradient(closest-side,rgba(255,255,255,.8),rgba(255,255,255,0))"></div>
<div style="left:100px;top:150px;width:70px;height:50px;border-radius:50%;background:radial-gradient(closest-side,rgba(255,255,255,.5),rgba(255,255,255,0))"></div>
</div>
<!-- P2 dark bridge 221-646 x 660-898 -->
<svg style="left:221px;top:660px" width="425" height="238" viewBox="221 660 425 238">
<rect x="221" y="660" width="425" height="238" fill="#080808"></rect>
<polygon points="221,660 354,660 250,772 221,766" fill="#345660"></polygon>
<polygon points="354,660 380,660 380,700 300,790 250,772" fill="#141a1c"></polygon>
<polygon points="221,766 250,772 243,812 221,806" fill="#3a3430"></polygon>
<polygon points="239,771 250,774 244,808 235,805" fill="#8a4028"></polygon>
<polygon points="221,822 380,852 380,898 221,898" fill="#3c3c3c"></polygon>
<path d="M221 826L380 856" stroke="#9a9a9a" stroke-width="3"></path>
<path d="M221 838L380 866" stroke="#6a6a6a" stroke-width="1.500"></path>
<g stroke="#8a8a8a" stroke-width="1.200"><path d="M226 840V898M233 841V898M240 842V898M247 843V898M254 845V898M261 846V898M268 847V898M275 848V898M289 851V898M296 852V898M303 853V898M310 855V898M317 856V898M324 857V898M331 858V898M338 860V898M345 861V898M352 862V898M366 865V898M373 866V898"></path></g>
<path d="M285 846L281 898M362 860L357 898" stroke="#1a1a1a" stroke-width="3"></path>
<polygon points="360,850 380,846 380,898 366,898" fill="#5a4640" opacity=".6"></polygon>
</svg>
<!-- P3 peach 221-646 x 902-966 -->
<div class="ph" style="left:221px;top:902px;width:425px;height:70px;background:radial-gradient(ellipse 110px 60px at 75px 40px,#e4b48a,#d4c4b4 70%,#c4c8c4)"></div>
<!-- P4 street 668.5-1100 x 406-655 -->
<svg style="left:668.500px;top:406px" width="430" height="249.500" viewBox="668.500 406 430 249.500">
<defs><linearGradient id="sky4" x1="0" y1="0" x2="0" y2="1"><stop offset="0" stop-color="#0c5eba"></stop><stop offset=".14" stop-color="#2c7ecc"></stop><stop offset=".28" stop-color="#7ab8e4"></stop><stop offset=".42" stop-color="#c0dcf0"></stop></linearGradient>
<filter id="b1" x="-5%" y="-5%" width="110%" height="110%"><feGaussianBlur stdDeviation="0.7"></feGaussianBlur></filter>
<filter id="b3" x="-20%" y="-20%" width="140%" height="140%"><feGaussianBlur stdDeviation="4"></feGaussianBlur></filter>
<pattern id="tiles" width="5" height="4" patternUnits="userSpaceOnUse" patternTransform="rotate(-8)"><rect width="5" height="4" fill="#47474a"></rect><path d="M0 0H5M0 0V4" stroke="#2a2a2c" stroke-width=".8"></path></pattern>
<clipPath id="c4"><rect x="668.500" y="406" width="430" height="249.500"></rect></clipPath></defs>
<g clip-path="url(#c4)">
<rect x="668.500" y="406" width="430" height="249.500" fill="url(#sky4)"></rect>
<g filter="url(#b3)"><ellipse cx="830" cy="450" rx="60" ry="6" fill="#fff" opacity=".9"></ellipse><ellipse cx="905" cy="464" rx="55" ry="8" fill="#fff" opacity=".85"></ellipse><ellipse cx="850" cy="476" rx="40" ry="7" fill="#f4f8fc" opacity=".8"></ellipse><ellipse cx="944" cy="409" rx="12" ry="5" fill="#fff"></ellipse></g>
<g filter="url(#b1)">
<!-- street -->
<polygon points="822,508 842,508 905,600 952,625 952,657 668,657 668,610 780,560" fill="#8f8d8a"></polygon>
<polygon points="826,512 840,512 870,560 880,656 760,656 800,570" fill="#9a9896"></polygon>
<!-- far buildings -->
<polygon points="822,498 845,500 870,498 885,500 885,520 845,512 822,512" fill="#8a7a6c"></polygon>
<polygon points="830,503 880,496 900,502 880,510 835,510" fill="#c8c0b8"></polygon>
<!-- right buildings -->
<polygon points="960,462 930,476 905,490 880,498 872,500 872,512 850,520 866,545 905,600 960,630" fill="#4a423c"></polygon>
<polygon points="960,462 932,474 906,488 884,497 886,501 910,494 935,482 960,470" fill="#28221e"></polygon>
<polygon points="906,492 930,484 930,520 906,528" fill="#7c7670"></polygon>
<polygon points="935,480 960,470 960,520 935,525" fill="#5a524c"></polygon>
<polygon points="863,538 905,526 932,524 918,536 895,548 880,548" fill="#6c6c7a"></polygon>
<polygon points="915,534 960,524 960,548 920,540" fill="#8a8a98"></polygon>
<polygon points="880,548 896,548 900,600 890,590" fill="#5a3a30"></polygon>
<polygon points="900,552 960,560 960,630 905,600" fill="#3c3632"></polygon>
<polygon points="905,560 925,563 925,590 905,588" fill="#a89a8c"></polygon>
<polygon points="908,585 922,575 926,596 910,598" fill="#c8c8c8"></polygon>
<path d="M902 542V622" stroke="#222" stroke-width="1.600"></path><rect x="899" y="541" width="6" height="8" fill="#303838"></rect>
<g stroke="#8a7a70" stroke-width=".7" fill="none" opacity=".8"><path d="M935 478C930 465 938 455 932 445M935 470L945 452M938 462L928 456M945 472C948 460 944 450 950 440M950 465L957 450M925 480L920 466L926 458"></path></g>
<path d="M948 420V475" stroke="#b0b0b0" stroke-width=".8"></path>
<!-- left big building -->
<polygon points="668,406 691,406 808,476 812,482 800,486 790,500 790,530 812,545 812,560 668,620" fill="#3a302a"></polygon>
<polygon points="691,406 700,406 811,474 808,480" fill="#1c1816"></polygon>
<polygon points="668,406 689,406 689,450 668,446" fill="#a08058"></polygon>
<polygon points="668,457 700,464 700,476 668,470" fill="#8c7252"></polygon>
<polygon points="668,478 742,500 738,506 668,488" fill="url(#tiles)"></polygon>
<polygon points="706,470 728,476 728,518 706,518" fill="#8e6e4c"></polygon>
<polygon points="728,476 756,484 756,520 728,518" fill="#64463a"></polygon>
<polygon points="756,484 776,490 776,526 756,522" fill="#b08e5c"></polygon>
<polygon points="668,500 716,510 716,520 668,516" fill="#2a2422"></polygon>
<polygon points="718,520 780,522 780,530 718,529" fill="#b89a64"></polygon>
<polygon points="778,484 812,490 816,500 780,498" fill="#4a4a4e"></polygon>
<polygon points="781,507 799,503 801,531 783,535" fill="#b8605c"></polygon>
<polygon points="800,502 812,505 812,540 802,534" fill="#d8d0c8"></polygon>
<!-- shop window left -->
<polygon points="668,516 712,520 712,602 668,610" fill="#4a3c3a"></polygon>
<polygon points="680,520 708,522 708,560 680,562" fill="#8a7470"></polygon>
<polygon points="681,570 707,566 708,592 684,600" fill="#e8107c"></polygon>
<polygon points="690,556 708,554 708,566 690,570" fill="#d8c8c8"></polygon>
<rect x="703" y="521" width="5" height="7" fill="#40c040"></rect>
<!-- tiled roof & awning -->
<polygon points="712,540 796,529 814,545 744,562" fill="url(#tiles)"></polygon>
<polygon points="744,562 804,545 811,552 764,578 752,574" fill="#dcd0b4"></polygon>
<polygon points="712,545 744,562 752,574 752,600 712,604" fill="#332a28"></polygon>
<!-- goods -->
<polygon points="752,578 800,556 814,566 816,600 800,640 760,640 748,610" fill="#54403c"></polygon>
<polygon points="756,592 796,580 800,610 770,636 752,626" fill="#7c5450"></polygon>
<polygon points="770,600 790,594 792,606 772,612" fill="#b8b0a8"></polygon>
<polygon points="760,630 772,624 768,644 758,644" fill="#c83048"></polygon>
<polygon points="796,586 804,582 804,600 796,602" fill="#3a6ab0"></polygon>
<polygon points="796,604 810,596 812,620 800,626" fill="#5a7a40"></polygon>
<polygon points="806,556 814,552 814,590 808,592" fill="#a87470"></polygon>
<!-- steps -->
<polygon points="668,612 748,598 760,640 770,657 668,657" fill="#86807a"></polygon>
<path d="M668 622L750 606M668 634L756 618M668 646L762 632" stroke="#5a544e" stroke-width="1.600"></path>
<!-- person -->
<circle cx="828" cy="548.500" r="1.800" fill="#2a2a30"></circle><path d="M828 550V561" stroke="#34404c" stroke-width="2.600"></path>
<ellipse cx="862" cy="610" rx="7" ry="2" fill="none" stroke="#6a6a6a" stroke-width=".8"></ellipse>
<polygon points="838,520 852,518 856,530 840,532" fill="#b8a840" opacity=".8"></polygon>
</g></g>
</svg>
<!-- P5 forest 400-943 x 660-898 -->
<svg style="left:400px;top:660px" width="543" height="238" viewBox="400 660 543 238">
<defs><linearGradient id="f5" x1="0" y1="0" x2="1" y2="0"><stop offset="0" stop-color="#5c3008"></stop><stop offset=".5" stop-color="#60340a"></stop><stop offset=".74" stop-color="#5c4420"></stop><stop offset=".88" stop-color="#4c6448"></stop><stop offset="1" stop-color="#4a8078"></stop></linearGradient>
<radialGradient id="glow" cx="0" cy="0" r="1" gradientUnits="userSpaceOnUse" gradientTransform="translate(742 812) scale(140 88)"><stop offset="0" stop-color="#fff6c8"></stop><stop offset=".35" stop-color="#ffd878" stop-opacity=".97"></stop><stop offset=".7" stop-color="#f0a040" stop-opacity=".6"></stop><stop offset="1" stop-color="#c87020" stop-opacity="0"></stop></radialGradient>
<radialGradient id="glow2" cx="0" cy="0" r="1" gradientUnits="userSpaceOnUse" gradientTransform="translate(925 800) scale(45 90)"><stop offset="0" stop-color="#a8e8e0" stop-opacity=".8"></stop><stop offset="1" stop-color="#60a098" stop-opacity="0"></stop></radialGradient>
<linearGradient id="gr5" x1="0" y1="0" x2="0" y2="1"><stop offset="0" stop-color="#82460c" stop-opacity="0"></stop><stop offset=".4" stop-color="#82460c" stop-opacity=".9"></stop><stop offset="1" stop-color="#74400e"></stop></linearGradient>
<filter id="b5" x="-5%" y="-5%" width="110%" height="110%"><feGaussianBlur stdDeviation="1.300"></feGaussianBlur></filter>
<clipPath id="c5"><rect x="400" y="660" width="543" height="238"></rect></clipPath></defs>
<g clip-path="url(#c5)">
<rect x="400" y="660" width="543" height="238" fill="url(#f5)"></rect>
<rect x="400" y="660" width="543" height="238" fill="url(#glow)"></rect>
<rect x="400" y="660" width="543" height="238" fill="url(#glow2)"></rect>
<g filter="url(#b5)" fill="#3c2208">
<polygon points="660,660 681,660 672,790 664,850 650,850" opacity=".7"></polygon>
<polygon points="692,660 699,660 697,830 692,830" opacity=".45"></polygon>
<polygon points="713,660 719,660 718,836 713,836" opacity=".4"></polygon>
<polygon points="735,660 741,660 740,838 735,838" opacity=".4"></polygon>
<polygon points="752,660 758,660 757,840 752,840" opacity=".4"></polygon>
<polygon points="771,660 776,660 776,838 771,838" opacity=".4"></polygon>
<polygon points="789,660 795,660 796,838 790,838" opacity=".45"></polygon>
<polygon points="806,660 813,660 815,836 808,836" opacity=".5"></polygon>
<polygon points="824,660 832,660 835,836 827,836" opacity=".55"></polygon>
<polygon points="845,660 871,660 877,852 846,852" fill="#2c1a0a" opacity=".95"></polygon>
<polygon points="886,660 894,660 904,836 896,836" opacity=".55"></polygon>
<polygon points="906,660 916,660 926,830 917,830" opacity=".5"></polygon>
<polygon points="930,660 943,660 943,800 936,800" opacity=".6"></polygon>
<rect x="650" y="660" width="293" height="50" fill="#4a2c10" opacity=".35"></rect>
</g>
<rect x="400" y="820" width="543" height="78" fill="url(#gr5)"></rect>
<path d="M840 850L790 870L700 880L650 878M880 852L943 842" stroke="#4a2c10" stroke-width="3" fill="none" opacity=".5" filter="url(#b5)"></path>
<polygon points="650,850 700,842 690,898 650,898" fill="#c8a880" opacity=".45" filter="url(#b5)"></polygon>
</g>
</svg>
<!-- S2 947-1100 x 660-898 -->
<div style="left:947px;top:660px;width:150px;height:238px;background:linear-gradient(180deg,#4a8ad0,#6a9ac0 60%,#5a7a90)"></div>
<!-- P6 dusk 400-822 x 902-966 -->
<svg style="left:400px;top:902px" width="422" height="70" viewBox="400 902 422 70">
<defs><linearGradient id="dusk" x1="0" y1="0" x2="0" y2="1"><stop offset="0" stop-color="#1436c8"></stop><stop offset=".55" stop-color="#2a4cd0"></stop><stop offset="1" stop-color="#6a84d8"></stop></linearGradient></defs>
<rect x="400" y="902" width="422" height="70" fill="url(#dusk)"></rect>
<path d="M400 950L650 946L672 942L690 944L720 941L760 937L790 938L822 934V972H400Z" fill="#101838"></path>
<path d="M650 952L700 950L760 947L822 945V972H650Z" fill="#202840"></path>
<path d="M652 946L660 940L664 934L666 940L674 946V952H652Z" fill="#c89038"></path>
<circle cx="660" cy="950" r="3" fill="#f0b040"></circle><circle cx="668" cy="954" r="2.500" fill="#e89030"></circle><circle cx="810" cy="948" r="2" fill="#e89030"></circle>
</svg>
<!-- P7 dark 826-1100 x 902-966 -->
<div class="ph" style="left:826px;top:902px;width:270px;height:70px;background:#0a0a0a"><div style="left:85px;top:40px;width:50px;height:40px;border-radius:50%;background:radial-gradient(closest-side,#ddd,rgba(120,120,120,0))"></div></div>
<!-- P8 butterfly 1222-1367 -->
<svg style="left:1222px;top:406px" width="146" height="100" viewBox="1222 406 146 100">
<defs><linearGradient id="g8" x1="0" y1="0" x2="1" y2="0"><stop offset="0" stop-color="#6f9a38"></stop><stop offset=".42" stop-color="#7a9a58"></stop><stop offset=".6" stop-color="#6e8ea8"></stop><stop offset="1" stop-color="#5f8fbc"></stop></linearGradient>
<filter id="b8" x="-10%" y="-10%" width="120%" height="120%"><feGaussianBlur stdDeviation="1.600"></feGaussianBlur></filter>
<clipPath id="c8"><rect x="1222" y="406" width="146" height="100"></rect></clipPath></defs>
<g clip-path="url(#c8)"><rect x="1222" y="406" width="146" height="100" fill="url(#g8)"></rect>
<g filter="url(#b8)">
<ellipse cx="1250" cy="412" rx="8" ry="7" fill="#c050c8"></ellipse><ellipse cx="1228" cy="410" rx="6" ry="5" fill="#b060c0"></ellipse><ellipse cx="1238" cy="420" rx="5" ry="8" fill="#a068b8"></ellipse>
<ellipse cx="1288" cy="418" rx="12" ry="9" fill="#7060d8"></ellipse><path d="M1290 420L1312 408M1292 422L1318 416M1286 414L1300 406" stroke="#d050a0" stroke-width="1.500"></path>
<ellipse cx="1262" cy="444" rx="9" ry="8" fill="#6a58d0"></ellipse><ellipse cx="1250" cy="448" rx="6" ry="5" fill="#7a60c0"></ellipse>
<ellipse cx="1260" cy="432" rx="10" ry="6" fill="#8a5a30"></ellipse><ellipse cx="1272" cy="428" rx="5" ry="8" fill="#a06a30"></ellipse>
<ellipse cx="1226" cy="456" rx="5" ry="8" fill="#b060c0"></ellipse>
<ellipse cx="1296" cy="462" rx="10" ry="9" fill="#6068d8"></ellipse><path d="M1300 462L1316 456M1300 466L1318 470" stroke="#d060a8" stroke-width="1.300"></path>
<ellipse cx="1266" cy="482" rx="8" ry="6" fill="#5a60d8"></ellipse><ellipse cx="1298" cy="492" rx="9" ry="6" fill="#5a68d0"></ellipse>
<ellipse cx="1240" cy="440" rx="8" ry="12" fill="#a8d050" opacity=".7"></ellipse><ellipse cx="1262" cy="466" rx="6" ry="10" fill="#b8d060" opacity=".6"></ellipse>
<polygon points="1238,458 1250,452 1258,470 1248,500 1230,500" fill="#2a2a2a"></polygon>
<polygon points="1222,464 1232,462 1236,480 1226,500 1222,500" fill="#e88a28"></polygon>
<polygon points="1252,474 1268,478 1282,500 1244,500" fill="#e8902a"></polygon>
<path d="M1256 476L1262 500M1262 478L1274 500" stroke="#3a2a1a" stroke-width="1.200"></path>
</g></g></svg>


</div>
</div>

<style>
.pt{position:absolute;background:#282828;left:1584px;width:336px;height:24px}
.act{position:absolute;background:#424242;height:22px;top:2px}
.grip{position:absolute;width:5px;height:9px;border-left:1px solid #5c5c5c;border-right:1px solid #5c5c5c}
.lbl{color:#cfcfcf}
.dis{color:#6e6e6e}
.tabt{color:#c8c8c8}
</style>
<div class="a" style="left:1584px;top:62px;width:336px;height:992px;background:#424242"></div>
<!-- Colour panel tabs -->
<div class="pt" style="top:62px"></div>
<div class="act" style="left:1602px;top:64px;width:42px"></div>
<div class="grip" style="left:1591px;top:69px"></div>
<span class="t s" style="left: 1607px; top: 66px; color: rgb(255, 255, 255); letter-spacing: -0.672px;">Colour</span>
<span class="t s tabt" style="left: 1649px; top: 66px; letter-spacing: -1.076px;">Swatches</span>
<span class="t s tabt" style="left: 1704px; top: 66px; letter-spacing: -0.482px;">Navigator</span>
<span class="t s tabt" style="left: 1762px; top: 66px; letter-spacing: -0.586px;">Histogram</span>
<span class="t s tabt" style="left: 1823px; top: 66px; letter-spacing: -0.339px;">Info</span>
<svg style="left:1902px;top:69px" width="12" height="9"><path d="M0 .5H8M0 2.500H8M0 4.500H8M0 6.500H8" stroke="#d8d8d8" stroke-width="1.100"></path><path d="M9 5.500H12L10.500 7.500Z" fill="#d8d8d8"></path></svg>
<!-- swatches -->
<svg style="left:1596px;top:98px" width="100" height="48" viewBox="1596 98 100 48">
<circle cx="1611.800" cy="114.800" r="11.800" fill="#000" stroke="#5a5a5a" stroke-width="1.300"></circle>
<circle cx="1623.800" cy="128.200" r="11.300" fill="#fff" stroke="#4a4a4a" stroke-width="1.600"></circle>
<circle cx="1606" cy="133.500" r="5" fill="#fff" stroke="#424242" stroke-width="1"></circle><path d="M1602.800 136.500L1609.200 130.500" stroke="#e0202a" stroke-width="1.800"></path>
<path d="M1626 105C1629 104 1633 107 1634 112" fill="none" stroke="#d8d8d8" stroke-width="1.200"></path><path d="M1624.500 105.500L1628 103M1624.500 105.500L1628 108M1634 113L1631 110M1634 113L1636 109.500" stroke="#d8d8d8" stroke-width="1.200" fill="none"></path>
<path d="M1647 117.500L1648.500 114L1655.500 107L1657.500 109L1650.500 116Z" fill="#9a9a9a"></path>
<path d="M1654 107C1655 106 1656 106 1656.500 105C1657 103 1660 102 1661.500 103.500C1663 105 1662 108 1660 108.500C1659 109 1659 110 1658 111Z" fill="#d59a34"></path>
<circle cx="1674" cy="110.200" r="6.900" fill="#ff0010" stroke="#555" stroke-width="1.100"></circle>
</svg>
<!-- lock + HSL -->
<div class="a" style="left:1808px;top:126px;width:18px;height:18px;background:#2c2c2c"></div>
<svg style="left:1812px;top:129px" width="10" height="12"><rect x="1" y="5" width="8" height="6.500" rx="1" fill="#c8c8c8"></rect><path d="M2.800 5V3.500A2.200 2.200 0 0 1 7.200 3.500V5" stroke="#c8c8c8" stroke-width="1.400" fill="none"></path></svg>
<div class="box sel" style="left:1830px;top:126px;width:80px;height:17px"></div>
<span class="t" style="left: 1835px; top: 127px; font-size: 11px; color: rgb(240, 240, 240); letter-spacing: -0.953px;">HSL</span>
<div class="tri" style="left:1898px;top:133px;border-width:4px 3.500px 0 3.500px"></div>
<!-- sliders -->
<span class="t lbl" style="left: 1598px; top: 151px; font-size: 11px; letter-spacing: -0.5px;">H:</span>
<span class="t lbl" style="left: 1600px; top: 175px; font-size: 11px; letter-spacing: -1.406px;">S:</span>
<span class="t lbl" style="left: 1600px; top: 199px; font-size: 11px; letter-spacing: -1.188px;">L:</span>
<div class="a" style="left:1612px;top:154px;width:254px;height:8px;border-radius:4px;background:linear-gradient(90deg,#f00 0%,#ff0 16.700%,#0f0 33.300%,#0ff 50%,#00f 66.700%,#f0f 83.300%,#f00 100%)"></div>
<div class="a" style="left:1612px;top:178.500px;width:254px;height:8px;border-radius:4px;background:#fff"></div>
<div class="a" style="left:1612px;top:202.500px;width:254px;height:8px;border-radius:4px;background:linear-gradient(90deg,#000,#fff)"></div>
<div class="a knob" style="left:1611.500px;top:152.500px;background:#f00"></div>
<div class="a knob" style="left:1611.500px;top:177px;background:#fff"></div>
<div class="a knob" style="left:1854.500px;top:201px;background:#fff"></div>
<style>.knob{width:11px;height:11px;border-radius:50%;border:1px solid #2a2a2a;box-shadow:inset 0 0 0 1.200px #fff,inset 0 0 0 2px #555}</style>
<div class="box" style="left:1870px;top:148.500px;width:40px;height:19px"></div>
<div class="box" style="left:1870px;top:173px;width:40px;height:19px"></div>
<div class="box" style="left:1870px;top:197px;width:40px;height:19px"></div>
<span class="t s" style="left:1876px;top:150px;color:#f0f0f0">0</span>
<span class="t s" style="left:1876px;top:174.500px;color:#f0f0f0">0</span>
<span class="t s" style="left: 1876px; top: 198.5px; color: rgb(240, 240, 240); letter-spacing: -1.016px;">100</span>
<div class="a" style="left:1597.500px;top:223.500px;width:313px;height:53px;border:1px solid #1c1c1c;background:linear-gradient(180deg,#fff 0%,#f4f4f4 8%,#0a0a0a 90%,#000 100%)"></div>
<span class="t lbl" style="left: 1598px; top: 280px; font-size: 11px; letter-spacing: -0.549px;">Opacity</span>
<div class="a" style="left:1603.500px;top:298px;width:13px;height:13px;border-radius:50%;background:#fff;border:1px solid #3a3a3a"></div>
<div class="a" style="left:1624px;top:301px;width:216px;height:7px;border-radius:4px;background-color:#555;background-image:linear-gradient(90deg,#fff,rgba(255,255,255,.0) 100%),conic-gradient(#707070 25%,#505050 0 50%,#707070 0 75%,#505050 0);background-size:auto,7px 7px"></div>
<div class="a" style="left:1830px;top:299px;width:11.500px;height:11.500px;border-radius:50%;border:1.300px solid #f0f0f0;background:#333"></div>
<div class="box" style="left:1846.500px;top:294px;width:59px;height:18.500px"></div>
<div class="a" style="left:1890px;top:295px;width:1px;height:16.500px;background:#1f1f1f"></div>
<span class="t s" style="left: 1853px; top: 295.5px; color: rgb(240, 240, 240); letter-spacing: -0.508px;">100 %</span>
<div class="tri" style="left:1894.500px;top:301.500px;border-width:4px 3.500px 0 3.500px"></div>
<!-- Transform tabs -->
<div class="pt" style="top:322px"></div>
<div class="act" style="left:1602px;top:324px;width:58px"></div>
<div class="grip" style="left:1591px;top:329px"></div>
<span class="t s" style="left: 1607px; top: 326px; color: rgb(255, 255, 255); letter-spacing: -0.779px;">Transform</span>
<span class="t s tabt" style="left: 1665px; top: 326px; letter-spacing: -1.089px;">Brushes</span>
<span class="t s tabt" style="left: 1713px; top: 326px; letter-spacing: -0.474px;">History</span>
<span class="t s tabt" style="left: 1757px; top: 326px; letter-spacing: -0.84px;">Snapshots</span>
<span class="t s tabt" style="left: 1817px; top: 326px; letter-spacing: -0.711px;">Macro</span>
<span class="t s tabt" style="left: 1858px; top: 326px; letter-spacing: -0.615px;">Library</span>
<svg style="left:1607px;top:368px" width="37" height="37" viewBox="0 0 37 37" fill="#686868"><rect x="3" y="3" width="31" height="31"></rect><rect x="0" y="0" width="6" height="6"></rect><rect x="15.500" y="0" width="6" height="6"></rect><rect x="31" y="0" width="6" height="6"></rect><rect x="0" y="15.500" width="6" height="6"></rect><rect x="31" y="15.500" width="6" height="6"></rect><rect x="0" y="31" width="6" height="6"></rect><rect x="15.500" y="31" width="6" height="6"></rect><rect x="31" y="31" width="6" height="6"></rect></svg>
<div class="box tf" style="left:1677.500px;top:358.500px"></div><div class="box tf" style="left:1773.500px;top:358.500px"></div>
<div class="box tf" style="left:1677.500px;top:382.500px"></div><div class="box tf" style="left:1773.500px;top:382.500px"></div>
<div class="box tf" style="left:1677.500px;top:412.500px"></div><div class="box tf" style="left:1773.500px;top:412.500px"></div>
<style>.tf{width:64px;height:19px;background:#3a3a3a;border-color:#252525;box-shadow:0 1px 0 #4c4c4c}</style>
<span class="t s dis" style="left:1664px;top:360px">X:</span><span class="t s dis" style="left:1756px;top:360px">W:</span>
<span class="t s dis" style="left:1665px;top:384px">Y:</span><span class="t s dis" style="left:1759px;top:384px">H:</span>
<span class="t s dis" style="left:1664px;top:414px">R:</span><span class="t s dis" style="left:1761px;top:414px">S:</span>
<span class="t s" style="left: 1683px; top: 360px; color: rgb(138, 138, 138); letter-spacing: -0.896px;">0 px</span><span class="t s" style="left: 1779px; top: 360px; color: rgb(138, 138, 138); letter-spacing: -0.896px;">0 px</span>
<span class="t s" style="left: 1683px; top: 384px; color: rgb(138, 138, 138); letter-spacing: -0.896px;">0 px</span><span class="t s" style="left: 1779px; top: 384px; color: rgb(138, 138, 138); letter-spacing: -0.896px;">0 px</span>
<span class="t s" style="left:1683px;top:414px;color:#8a8a8a">0 °</span><span class="t s" style="left:1779px;top:414px;color:#8a8a8a">0 °</span>
<div class="tri" style="left:1731.500px;top:420px;border-width:3.500px 3px 0 3px;border-top-color:#8a8a8a"></div>
<div class="tri" style="left:1827.500px;top:420px;border-width:3.500px 3px 0 3px;border-top-color:#8a8a8a"></div>
<svg style="left:1845px;top:373px" width="6" height="14" fill="none" stroke="#9a9a9a" stroke-width="1.100"><ellipse cx="3" cy="3.500" rx="1.800" ry="2.800"></ellipse><ellipse cx="3" cy="10.500" rx="1.800" ry="2.800"></ellipse><path d="M3 4.500V9.500"></path></svg>
<!-- Layers tabs -->
<div class="pt" style="top:450px"></div>
<div class="act" style="left:1602px;top:452px;width:40px"></div>
<div class="grip" style="left:1591px;top:457px"></div>
<span class="t s" style="left: 1607px; top: 454px; color: rgb(255, 255, 255); letter-spacing: -1.206px;">Layers</span>
<span class="t s tabt" style="left: 1647px; top: 454px; letter-spacing: -1.103px;">Assets</span>
<span class="t s tabt" style="left: 1688px; top: 454px; letter-spacing: -0.711px;">Character</span>
<span class="t s tabt" style="left: 1744px; top: 454px; letter-spacing: -0.818px;">Paragraph</span>
<span class="t s tabt" style="left: 1803px; top: 454px; letter-spacing: -0.578px;">Metadata</span>
<svg style="left:1902px;top:457px" width="12" height="9"><path d="M0 .5H8M0 2.500H8M0 4.500H8M0 6.500H8" stroke="#d8d8d8" stroke-width="1.100"></path><path d="M9 5.500H12L10.500 7.500Z" fill="#d8d8d8"></path></svg>
<span class="t lbl" style="left: 1592px; top: 481px; font-size: 11px; color: rgb(228, 228, 228); letter-spacing: -0.623px;">Opacity:</span>
<div class="box" style="left:1632.500px;top:478.500px;width:74px;height:19px"></div>
<span class="t s" style="left: 1638px; top: 480px; color: rgb(240, 240, 240); letter-spacing: -0.508px;">100 %</span>
<div class="tri" style="left:1696px;top:486px;border-width:4px 3.500px 0 3.500px"></div>
<div class="box sel" style="left:1711.500px;top:478.500px;width:160px;height:19px"></div>
<span class="t s" style="left: 1716px; top: 480.5px; color: rgb(240, 240, 240); letter-spacing: -0.534px;">Normal</span>
<div class="tri" style="left:1860px;top:486.500px;border-width:4px 3.500px 0 3.500px"></div>
<svg style="left:1876px;top:481px" width="14" height="14" viewBox="-7 -7 14 14"><g fill="#c4c4c4"><circle r="4.600"></circle><g id="teeth"><rect x="-1.300" y="-6.500" width="2.600" height="13"></rect><rect x="-1.300" y="-6.500" width="2.600" height="13" transform="rotate(45)"></rect><rect x="-1.300" y="-6.500" width="2.600" height="13" transform="rotate(90)"></rect><rect x="-1.300" y="-6.500" width="2.600" height="13" transform="rotate(135)"></rect></g></g><circle r="2" fill="#424242"></circle></svg>
<svg style="left:1900px;top:481px" width="10" height="13"><rect x=".5" y="5.500" width="9" height="7" rx="1" fill="#bdbdbd"></rect><path d="M2.500 5.500V3.500A2.500 2.500 0 0 1 7.500 3.500V5.500" stroke="#bdbdbd" stroke-width="1.500" fill="none"></path></svg>
<!-- layer list -->
<div class="a" style="left:1584px;top:503px;width:336px;height:529px;background:#333"></div>
<div class="a" style="left:1584px;top:503px;width:318px;height:31px;background:#2f3b45;border-bottom:1px solid #111"></div>
<div class="a" style="left:1584px;top:534px;width:318px;height:31px;background:#2f3b45;border-bottom:1px solid #111"></div>
<div class="a" style="left:1584px;top:565px;width:318px;height:31px;background:#6690cf;border-bottom:1px solid #111"></div>
<svg style="left:1584px;top:503px" width="318" height="93" viewBox="1584 503 318 93">
<g fill="none" stroke="#e8e8e8" stroke-width="1.200"><circle cx="1594" cy="518" r="6.800"></circle><circle cx="1604" cy="549" r="6.800"></circle></g>
<path d="M1589.500 515H1598.500L1594 522.500Z M1599.500 546H1608.500L1604 553.500Z" fill="#c8c8c8"></path>
<rect x="1605" y="504.500" width="27.500" height="27.500" fill="#262626" stroke="#111"></rect>
<rect x="1606.500" y="511" width="4" height="15" fill="#7a8088"></rect><rect x="1615" y="511" width="6" height="15" fill="#6a6058"></rect><rect x="1616.500" y="513" width="3" height="6" fill="#b07830"></rect><rect x="1616" y="511" width="4" height="3" fill="#5070a8"></rect><rect x="1626.500" y="511" width="5" height="15" fill="#8a8a8a"></rect><rect x="1626.500" y="512" width="2" height="6" fill="#7088b0"></rect>
<rect x="1615" y="535.500" width="27.500" height="27.500" fill="#262626" stroke="#111"></rect>
<rect x="1616.500" y="542" width="5.500" height="14.500" fill="#fff"></rect><rect x="1626.500" y="542" width="5" height="20" fill="#fff"></rect><rect x="1636.500" y="542" width="5" height="10" fill="#fff"></rect><rect x="1631" y="552" width="10.500" height="10" fill="#fff"></rect><circle cx="1636.500" cy="556.500" r="3.300" fill="#8a8a8a"></circle>
<rect x="1625.500" y="566.500" width="27" height="27" fill="#fff" stroke="#111"></rect>
<circle cx="1646" cy="587.500" r="4.600" fill="#222"></circle><path d="M1643 590.800A4.600 4.600 0 0 0 1649.300 584.500Z" fill="#fff" transform="rotate(180 1646 587.500)" opacity="0"></path><path d="M1648.500 584.500C1646 585.500 1644.500 588 1644.500 590.500C1647 590 1649.500 587.500 1648.500 584.500Z" fill="#fff"></path>
<g fill="none" stroke="#e0e0e0" stroke-width="1.200"><rect x="1886.500" y="512.500" width="11" height="11" rx="1.500"></rect><rect x="1886.500" y="543.500" width="11" height="11" rx="1.500"></rect><rect x="1886.500" y="574.500" width="11" height="11" rx="1.500" stroke="#c4cfe4"></rect></g>
<g fill="none" stroke="#f0f0f0" stroke-width="1.500"><path d="M1888.500 518L1891 521.500L1896 513.500"></path><path d="M1888.500 549L1891 552.500L1896 544.500"></path><path d="M1888.500 580L1891 583.500L1896 575.500" stroke="#d4dcec"></path></g>
</svg>
<span class="t" style="left: 1637px; top: 510.5px; color: rgb(230, 230, 230); letter-spacing: -0.799px;">(Image)</span>
<span class="t" style="left: 1647px; top: 541.5px; color: rgb(230, 230, 230); letter-spacing: -0.944px;">(Mask)</span>
<span class="t" style="left: 1657px; top: 572.5px; color: rgb(228, 236, 248); letter-spacing: -0.598px;">(Curves Adjustment)</span>
<!-- bottom toolbar -->
<div class="a" style="left:1584px;top:1032px;width:336px;height:22px;background:#424242"></div>
<div class="a" style="left:1589px;top:1033px;width:21px;height:20px;background:#2a2a2a"></div>
<svg style="left:1591px;top:1036px" width="17" height="14" fill="#c8c8c8"><path d="M0 0L8.500 3.500L17 0V2.500L8.500 6L0 2.500Z M0 4L8.500 7.500L17 4V6.500L8.500 10L0 6.500Z M0 8L8.500 11.500L17 8V10.500L8.500 14L0 10.500Z"></path></svg>
<svg style="left:1745px;top:1035px" width="170" height="16" viewBox="1745 1035 170 16">
<rect x="1748" y="1037" width="14" height="12" fill="#c0c0c0"></rect><circle cx="1755" cy="1043" r="3.800" fill="#3a3a3a"></circle>
<circle cx="1777" cy="1043" r="5.600" fill="none" stroke="#c0c0c0" stroke-width="1.200"></circle><path d="M1781 1039A5.600 5.600 0 0 0 1773 1047Z" fill="#c0c0c0"></path>
<text x="1792" y="1048" font-family="Liberation Serif,serif" font-style="italic" font-size="15" fill="#c0c0c0">fx</text>
<path d="M1816 1037H1826L1822.500 1043L1826 1049H1816L1819.500 1043Z" fill="#c0c0c0"></path>
<path d="M1855 1038H1859.500L1860.500 1039.500H1867V1048H1855Z" fill="#b0b0b0"></path>
<rect x="1877.500" y="1037.500" width="10" height="11" fill="#bbb"></rect><g fill="#333"><rect x="1879" y="1039" width="2" height="2"></rect><rect x="1883" y="1039" width="2" height="2"></rect><rect x="1881" y="1041" width="2" height="2"></rect><rect x="1885" y="1041" width="2" height="2"></rect><rect x="1879" y="1043" width="2" height="2"></rect><rect x="1883" y="1043" width="2" height="2"></rect><rect x="1881" y="1045" width="2" height="2"></rect><rect x="1885" y="1045" width="2" height="2"></rect></g>
<path d="M1901 1039.500H1910.500M1904 1039V1037.500H1907.500V1039M1902 1041V1049H1909.500V1041M1904 1041.500V1048M1905.750 1041.500V1048M1907.500 1041.500V1048" stroke="#bdbdbd" stroke-width="1.200" fill="none"></path>
</svg>

<div class="a" style="left:1110px;top:490px;width:429px;height:521px;background:#3f3f3f;box-shadow:inset 1px 1px 0 0 #262626"></div>
<div class="a" style="left:1110px;top:490px;width:429px;height:23px;background:#383838"></div>
<span class="t s" style="left: 1304px; top: 495px; color: rgb(240, 240, 240); letter-spacing: -0.403px;">Curves</span>
<svg style="left:1523px;top:497px" width="10" height="10" stroke="#f0f0f0" stroke-width="1.400"><path d="M.8 .8L9.200 9.200M9.200 .8L.8 9.200"></path></svg>
<div class="a" style="left:1110px;top:513px;width:429px;height:31px;background:#4a4a4a;border-bottom:1px solid #2e2e2e"></div>
<div class="btn" style="left:1119.500px;top:518.500px;width:67px;height:19px"></div>
<div class="btn" style="left:1387.500px;top:518.500px;width:44px;height:19px"></div>
<div class="btn" style="left:1440.500px;top:518.500px;width:43px;height:19px"></div>
<div class="btn" style="left:1492.500px;top:518.500px;width:38px;height:19px"></div>
<span class="t s" style="left: 1124px; top: 520px; color: rgb(240, 240, 240); letter-spacing: -0.153px;">Add Preset</span>
<span class="t s" style="left: 1392px; top: 520px; color: rgb(240, 240, 240); letter-spacing: 0.246px;">Merge</span>
<span class="t s" style="left: 1445px; top: 520px; color: rgb(240, 240, 240); letter-spacing: -0.037px;">Delete</span>
<span class="t s" style="left: 1497px; top: 520px; color: rgb(240, 240, 240); letter-spacing: -0.59px;">Reset</span>
<!-- graph -->
<svg style="left:1120px;top:555px" width="420" height="355" viewBox="1120 555 420 355">
<rect x="1127.500" y="562.500" width="395" height="340.500" fill="#1a1a1a" stroke="#8c8c8c" stroke-width="1.300"></rect>
<g stroke="#5a5a5a" stroke-width="1"><path d="M1227 563V903M1326 563V903M1425 563V903"></path><path d="M1128 648.500H1523M1128 733.500H1523M1128 819H1523"></path></g>
<path d="M1326 563V903" stroke="#6e6e6e" stroke-width="1.200"></path>
<path d="M1128 902.500L1522 563.500" stroke="#f4c4c8" stroke-width="1.300"></path>
<path d="M1128 902.500L1521.500 777.500" stroke="#8a8a8a" stroke-width="1"></path>
<circle cx="1127.700" cy="902.800" r="3.800" fill="#8a8a8a"></circle>
<circle cx="1521.700" cy="777.500" r="3.600" fill="#050505" stroke="#6a6a6a" stroke-width=".8"></circle>
<ellipse cx="1521.500" cy="777.800" rx="18" ry="16.500" fill="none" stroke="#e6007e" stroke-width="3.200"></ellipse>
</svg>
<!-- selects -->
<div class="box sel" style="left:1123.500px;top:915px;width:74px;height:19px"></div>
<span class="t" style="left:1128px;top:917px;font-size:11px;color:#f0f0f0">RGB</span>
<div class="tri" style="left:1186px;top:923px;border-width:4px 3.500px 0 3.500px"></div>
<div class="box sel" style="left:1203.500px;top:915px;width:274.500px;height:19px;box-shadow:none"></div><div class="a" style="left:1202px;top:913.700px;width:277.300px;height:21.300px;border:2.200px solid #e6007e"></div>
<span class="t" style="left:1207px;top:917px;font-size:11px;color:#f0f0f0">Alpha</span>
<div class="tri" style="left:1467.500px;top:923px;border-width:4px 3.500px 0 3.500px"></div>
<div class="btn" style="left:1485.500px;top:915px;width:41px;height:19px"></div>
<span class="t s" style="left: 1490px; top: 916.5px; color: rgb(240, 240, 240); letter-spacing: -0.269px;">Picker</span>
<span class="t" style="left: 1123px; top: 942px; font-size: 11px; color: rgb(232, 232, 232); letter-spacing: 0.138px;">Input minimum:</span>
<div class="box" style="left:1202.500px;top:941px;width:54px;height:19px"></div>
<span class="t" style="left:1208px;top:942.500px;font-size:11px;color:#f0f0f0">0</span>
<span class="t" style="left: 1389px; top: 942px; font-size: 11px; color: rgb(232, 232, 232); letter-spacing: 0.058px;">Input maximum:</span>
<div class="box" style="left:1470.500px;top:941px;width:54px;height:19px"></div>
<span class="t" style="left:1476px;top:942.500px;font-size:11px;color:#f0f0f0">1</span>
<!-- arrow -->
<svg style="left:1260px;top:940px" width="130" height="45" viewBox="1260 940 130 45" fill="none" stroke="#e6007e" stroke-width="2.600" stroke-linecap="round" stroke-linejoin="round">
<path d="M1384 969.500C1350 983 1310 982 1272 950"></path><path d="M1298 947.500C1288 945.500 1280 945 1271.500 948.500C1268 954 1268.500 960 1270 965.500"></path>
</svg>
<!-- footer -->
<div class="a" style="left:1110px;top:980px;width:429px;height:31px;background:#4a4a4a;border-top:1px solid #363636"></div>
<span class="t" style="left: 1116px; top: 989px; font-size: 11px; color: rgb(232, 232, 232); letter-spacing: -0.051px;">Opacity:</span>
<div class="box" style="left:1159.500px;top:986.500px;width:59px;height:19px"></div>
<span class="t s" style="left: 1165px; top: 988px; color: rgb(240, 240, 240); letter-spacing: -0.508px;">100 %</span>
<div class="tri" style="left:1208px;top:994.500px;border-width:4px 3.500px 0 3.500px"></div>
<span class="t" style="left: 1318px; top: 989px; font-size: 11px; color: rgb(232, 232, 232); letter-spacing: -0.027px;">Blend Mode:</span>
<div class="box sel" style="left:1382.500px;top:986.500px;width:131px;height:19px"></div>
<span class="t s" style="left: 1387px; top: 988.5px; color: rgb(240, 240, 240); letter-spacing: -0.534px;">Normal</span>
<div class="tri" style="left:1502.500px;top:994.500px;border-width:4px 3.500px 0 3.500px"></div>
<svg style="left:1520.500px;top:989px" width="14" height="14" viewBox="-7 -7 14 14"><g fill="#c4c4c4"><circle r="4.600"></circle><rect x="-1.300" y="-6.500" width="2.600" height="13"></rect><rect x="-1.300" y="-6.500" width="2.600" height="13" transform="rotate(45)"></rect><rect x="-1.300" y="-6.500" width="2.600" height="13" transform="rotate(90)"></rect><rect x="-1.300" y="-6.500" width="2.600" height="13" transform="rotate(135)"></rect></g><circle r="2" fill="#4a4a4a"></circle></svg>

<div class="a" style="left:0;top:1054px;width:1920px;height:26px;background:#333"></div>
<div class="a" style="left:0;top:1078px;width:1920px;height:2px;background:#262626"></div>
<span class="t s" style="left: 16px; top: 1060px; color: rgb(196, 196, 196); letter-spacing: -0.05px;">'Curves Adjustment' selected. <b style="color:#f4f4f4">Drag</b> to move selection. <b style="color:#f4f4f4">Click</b> another object to select it. <b style="color:#f4f4f4">Click</b> on an empty area to deselect selection.</span>


</body></html>
